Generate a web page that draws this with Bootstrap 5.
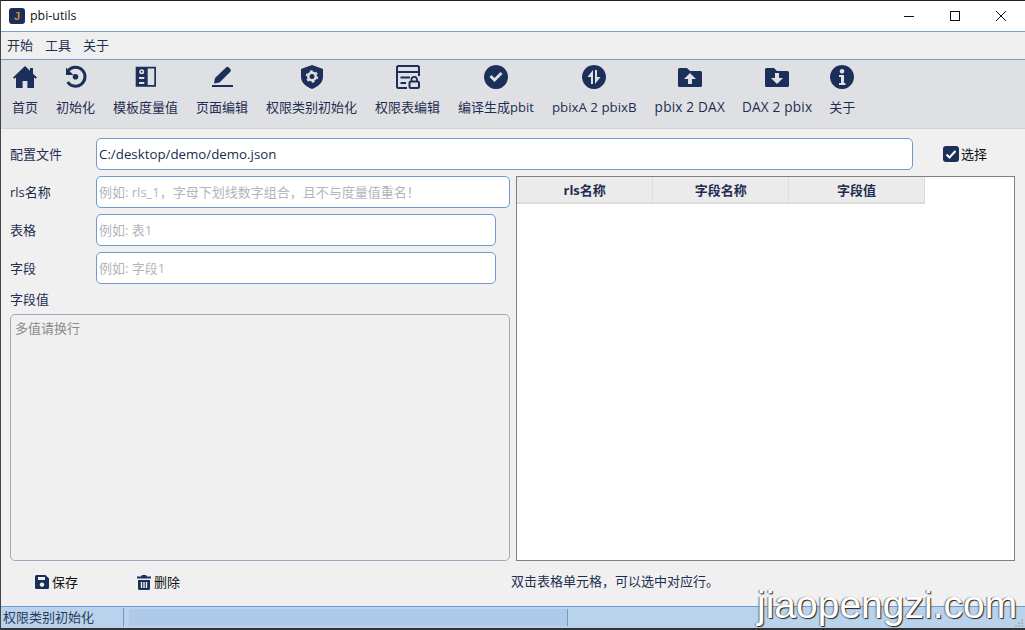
<!DOCTYPE html>
<html lang="zh">
<head>
<meta charset="utf-8">
<title>pbi-utils</title>
<link rel="stylesheet" href="https://cdn.jsdelivr.net/npm/bootstrap@5.3.0/dist/css/bootstrap.min.css">
<style>
html,body{height:630px;overflow:hidden}
body{background:#f0f0f0;color:#1f2d50;font-family:"Open Sans","Noto Sans CJK SC",sans-serif;font-size:13px;line-height:18px;position:relative}
.win{height:630px;border-top:1px solid #222;border-bottom:2px solid #333;border-left:1px solid #444;display:flex;flex-direction:column}
.ttl{height:30px;background:#fff;color:#111;flex:none}
.ttl-logo{width:16px;height:16px;border-radius:3px;background:#1c2f5a;color:#c8982c;font:bold 11px/16px "Liberation Sans",sans-serif;text-align:center;margin:0 5px 0 8px}
.ttl-name{font-size:12.4px}
.winbtns{margin-left:auto;margin-right:1px}
.winbtn{width:46px;height:30px;display:flex;align-items:center;justify-content:center}
.mnu{height:29px;background:#efefef;border-top:1px solid #7a9fcb;border-bottom:1px solid #7a9fcb;padding:0 0 2px 6px;gap:12px;flex:none}
.tbar{height:69px;background:#dfe0e4;border-bottom:1px solid #d3d3d8;padding:4px 0 0 11px;gap:18px;flex:none}
.tool{display:flex;flex-direction:column;align-items:center;white-space:nowrap;gap:8px}
.tool svg{width:26px;height:26px;fill:#1c2f5a;display:block}
.tool span{line-height:18px}
.tool span.lat{font-size:13.3px}
.tool span.latw{font-size:13.6px;letter-spacing:.2px}
.tbar .tight{margin-right:-1px}
.main{flex:1 1 auto;padding:9px 10px 0 9px;min-height:0;display:flex;flex-direction:column}
.lbl{width:86px;flex:none}
.fld.form-control{height:32px;border:1px solid #6d9ad0;border-radius:5px;padding:0 2px;font-size:13px;color:#1a2b50;background:#fff;box-shadow:none;font-family:inherit}
.fld.form-control.path{font-size:13.3px}
.fld.form-control::placeholder{color:#b4b4ba;opacity:1}
.pick{margin-left:30px;margin-right:28px;width:45px;color:#111;gap:2px}
.leftcol{width:500px;flex:none}
.rowgap{margin-top:6px}
.narrow{padding-right:14px}
.valhead{margin:6px 0}
.ta.form-control{flex:1 1 auto;background:#f0f0f0;border:1px solid #a0a8c0;border-radius:5px;padding:4px;resize:none;font-size:13px;line-height:18px;font-family:inherit;box-shadow:none}
.ta.form-control::placeholder{color:#8b8b8b;opacity:1}
.tblbox{width:499px;margin-left:6px;background:#fff;border:1px solid #808080;flex:none}
.tblbox .table{width:408px;margin:0;table-layout:fixed;--bs-table-bg:transparent}
.tblbox th{background:#ebebeb;height:26px;padding:0;text-align:center;font-weight:700;color:#1f2d50;border:0;border-right:1px solid #dcdcdc;border-bottom:2px solid #dcdcdc;font-size:13px;line-height:24px}
.foot{height:45px;flex:none}
.act{color:#111;gap:3px;position:absolute;top:573px}
.hint{position:absolute;left:511px;top:572px;font-size:13px}
.sbar{height:22px;background:#bad3ec;border-top:1px solid #6d9ad0;flex:none;color:#2a3a5c}
.sname{width:123px;padding-left:2px;border-right:1px solid #6d9ad0;height:19px;white-space:nowrap}
.sprog{width:439px;height:17px;margin-left:5px;background:#aecae8;border-right:1px solid #6d9ad0;flex:none}
.wm{position:absolute;left:757px;top:581px;font:39px/48px "Liberation Sans",sans-serif;color:#fff;text-shadow:1px 1px 1px #222,-1px 0 1px #777;white-space:nowrap}
.grip{position:absolute;right:2px;bottom:3px}
</style>
</head>
<body>
<div class="win">
  <div class="ttl d-flex align-items-center">
    <div class="ttl-logo">J</div><div class="ttl-name">pbi-utils</div>
    <div class="winbtns d-flex">
      <div class="winbtn"><svg width="12" height="12"><path d="M1 6.5h10" stroke="#111"/></svg></div>
      <div class="winbtn"><svg width="12" height="12"><rect x="1.5" y="1.5" width="9" height="9" fill="none" stroke="#111"/></svg></div>
      <div class="winbtn"><svg width="12" height="12"><path d="M1 1l10 10M11 1L1 11" stroke="#111"/></svg></div>
    </div>
  </div>
  <div class="mnu d-flex align-items-center"><span>开始</span><span>工具</span><span>关于</span></div>
  <div class="tbar d-flex align-items-start">
    <div class="tool"><svg viewBox="0 0 26 26"><path d="M13 2 1 13.5l1.4 1.3L4 13.4V24h6.6v-7h4.8v7H22V13.4l1.6 1.4 1.4-1.3-4-3.8V4h-3v2.8z"/></svg><span>首页</span></div>
    <div class="tool"><svg viewBox="0 0 26 26"><path fill="none" stroke="#1c2f5a" stroke-width="3" d="M5.2 6.600A9.500 9.500 0 1 1 4.600 18"/><path d="M3 3.500V11H10.500z"/><circle cx="12.500" cy="12.700" r="2.800"/></svg><span>初始化</span></div>
    <div class="tool"><svg viewBox="0 0 26 26"><path fill-rule="evenodd" d="M2.700 2.700H23V22.700H2.700zM14.700 4.500V21H21.300V4.500zM6 13V15H11.300V13zM6 18V20H11.300V18z"/><circle cx="8.700" cy="7.700" r="1.700" fill="none" stroke="#dfe0e4" stroke-width="1.600"/></svg><span>模板度量值</span></div>
    <div class="tool"><svg viewBox="0 0 26 26"><path d="M3 21h21v2H3zM6 14 17 3.500a2 2 0 0 1 2.800 0l1.500 1.500a2 2 0 0 1 0 2.800L10.500 18.500 5 19.500z"/></svg><span>页面编辑</span></div>
    <div class="tool"><svg viewBox="0 0 26 26"><path d="M13 1 24 5v7.500C24 18.500 19.500 22.500 13 25 6.500 22.500 2 18.500 2 12.500V5z"/><circle cx="13" cy="12.500" r="3.700" fill="none" stroke="#dfe0e4" stroke-width="2.400"/><circle cx="13" cy="12.500" r="5.400" fill="none" stroke="#dfe0e4" stroke-width="1.600" stroke-dasharray="2.800 2.855"/></svg><span>权限类别初始化</span></div>
    <div class="tool"><svg viewBox="0 0 26 26"><path fill="none" stroke="#1c2f5a" stroke-width="2" d="M12 24H3.500A1.500 1.500 0 0 1 2 22.500V3.500A1.500 1.500 0 0 1 3.500 2H22.500A1.500 1.500 0 0 1 24 3.500V12M2 8H24M5.500 13.500H15M5.500 19H11"/><rect x="14.500" y="17.500" width="9.500" height="6.500" rx="1.500" fill="none" stroke="#1c2f5a" stroke-width="2"/><path fill="none" stroke="#1c2f5a" stroke-width="1.800" d="M16.500 17V15.500a2.700 2.700 0 0 1 5.400 0V17"/></svg><span>权限表编辑</span></div>
    <div class="tool"><svg viewBox="0 0 26 26"><path fill-rule="evenodd" d="M13 1a12 12 0 1 0 .01 0zM6.500 13l2-2 3 3 6-6 2 2-8 8z"/></svg><span>编译生成pbit</span></div>
    <div class="tool"><svg viewBox="0 0 26 26"><path fill-rule="evenodd" d="M13 1a12 12 0 1 0 .01 0zM12 6V20H10V13H6.500zM14 20V6H16V13H19.500z"/></svg><span class="lat">pbixA 2 pbixB</span></div>
    <div class="tool tight"><svg viewBox="0 0 26 26"><path fill-rule="evenodd" d="M1 5.500A1.500 1.500 0 0 1 2.500 4H10l3 3h10.500A1.500 1.500 0 0 1 25 8.500v13a1.500 1.500 0 0 1-1.500 1.500h-21A1.500 1.500 0 0 1 1 21.500zM13 9l-6 6h4v5h4v-5h4z"/></svg><span class="latw">pbix 2 DAX</span></div>
    <div class="tool tight"><svg viewBox="0 0 26 26"><path fill-rule="evenodd" d="M1 5.500A1.500 1.500 0 0 1 2.500 4H10l3 3h10.500A1.500 1.500 0 0 1 25 8.500v13a1.500 1.500 0 0 1-1.500 1.500h-21A1.500 1.500 0 0 1 1 21.500zM11 9v5H7l6 6 6-6h-4V9z"/></svg><span class="latw">DAX 2 pbix</span></div>
    <div class="tool"><svg viewBox="0 0 26 26"><path fill-rule="evenodd" d="M13 1a12 12 0 1 0 .01 0zM13 5a2.300 2.300 0 1 1-.01 0zM10 11h5v8h1.500v2h-6.500v-2H12v-6h-2z"/></svg><span>关于</span></div>
  </div>
  <div class="main">
    <div class="d-flex align-items-center">
      <div class="lbl">配置文件</div>
      <input class="form-control fld path" value="C:/desktop/demo/demo.json">
      <label class="pick d-flex align-items-center"><svg width="16" height="16" class="flex-shrink-0"><rect width="16" height="16" rx="3" fill="#1c2f5a"/><path d="M3.500 8.500l3 3 6-6.500" fill="none" stroke="#fff" stroke-width="2"/></svg><span class="text-nowrap">选择</span></label>
    </div>
    <div class="d-flex flex-grow-1 rowgap" style="min-height:0">
      <div class="leftcol d-flex flex-column">
        <div class="d-flex align-items-center"><div class="lbl">rls名称</div><input class="form-control fld" placeholder="例如: rls_1，字母下划线数字组合，且不与度量值重名！"></div>
        <div class="d-flex align-items-center rowgap narrow"><div class="lbl">表格</div><input class="form-control fld" placeholder="例如: 表1"></div>
        <div class="d-flex align-items-center rowgap narrow"><div class="lbl">字段</div><input class="form-control fld" placeholder="例如: 字段1"></div>
        <div class="valhead">字段值</div>
        <textarea class="form-control ta" placeholder="多值请换行"></textarea>
      </div>
      <div class="tblbox">
        <table class="table"><thead><tr><th>rls名称</th><th>字段名称</th><th>字段值</th></tr></thead><tbody></tbody></table>
      </div>
    </div>
    <div class="foot"></div>
  </div>
  <div class="sbar d-flex align-items-center">
    <div class="sname">权限类别初始化</div><div class="sprog"></div>
  </div>
</div>
<div class="act d-flex align-items-center" style="left:35px"><svg width="14" height="14"><path fill="#1c2f5a" fill-rule="evenodd" d="M1.500 0H10.500L14 3.500V12.500A1.500 1.500 0 0 1 12.500 14H1.500A1.500 1.500 0 0 1 0 12.500V1.500A1.500 1.500 0 0 1 1.500 0zM3 2V5H10V2zM7 7.500a2.200 2.200 0 1 0 .01 0z"/></svg><span>保存</span></div>
<div class="act d-flex align-items-center" style="left:137px"><svg width="14" height="15"><path fill="#1c2f5a" fill-rule="evenodd" d="M5 0H9L10 1.500H14V3.500H0V1.500H4zM1 5H13V13.500A1.500 1.500 0 0 1 11.500 15H2.500A1.500 1.500 0 0 1 1 13.500zM3.800 7V13H5.200V7zM6.300 7V13H7.700V7zM8.800 7V13H10.200V7z"/></svg><span>删除</span></div>
<div class="hint">双击表格单元格，可以选中对应行。</div>
<div class="wm">jiaopengzi.com</div>
<svg class="grip" width="8" height="8"><path fill="#a9b4c2" d="M6 0h2v2H6zM3 3h2v2H3zM6 3h2v2H6zM0 6h2v2H0zM3 6h2v2H3zM6 6h2v2H6z"/></svg>
</body>
</html>
